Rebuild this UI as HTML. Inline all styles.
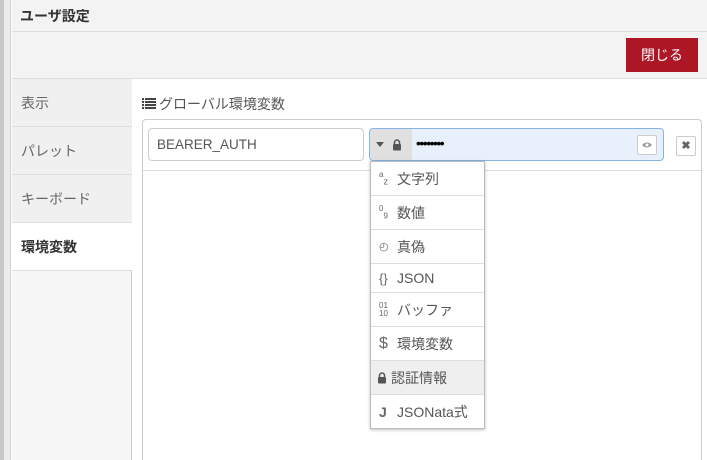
<!DOCTYPE html>
<html style="width:707px;height:460px;overflow:hidden"><head><meta charset="utf-8"><style>
*{box-sizing:border-box;margin:0;padding:0}
body{width:707px;height:460px;overflow:hidden;background:#fff;font-family:"Liberation Sans","Noto Sans CJK JP",sans-serif;font-size:14px;color:#555;position:relative}
.abs{position:absolute}
.strip{left:0;top:0;width:4px;height:460px;background:#c8c8c8}
.strip2{left:4px;top:0;width:7px;height:460px;background:#ececec;border-right:1px solid #d0d0d0}
.hdr{left:12px;top:0;width:695px;height:32px;background:#f3f3f3;border-bottom:1px solid #ddd;font-weight:bold;color:#333;padding:6px 0 0 8px}
.bar{left:12px;top:32px;width:695px;height:47px;background:#f3f3f3;border-bottom:1px solid #ddd}
.btn{left:626px;top:38px;width:72px;height:34px;background:#ad1625;color:#fff;text-align:center;line-height:34px;font-size:14px}
.side{left:12px;top:79px;width:120px;height:381px;background:#f7f7f7;border-right:1px solid #ccc}
.tab{position:absolute;left:0;width:120px;height:48px;background:#f0f0f0;border-bottom:1px solid #ddd;padding:14px 0 0 9px;color:#666;font-size:14px}
.tab.act{background:#fff;color:#333;font-weight:bold}
.panel{left:142px;top:119px;width:560px;height:341px;border:1px solid #ccc;border-bottom:none;border-radius:4px 4px 0 0}
.inp{left:148px;top:128px;width:216px;height:33px;border:1px solid #ccc;border-radius:4px;padding:8px 0 0 8px;color:#555;font-size:13.5px}
.pw{left:369px;top:128px;width:295px;height:33px;border:1px solid #85b4e6;border-radius:4px;background:#e8f0fc}
.menu{left:370px;top:161px;width:115px;height:268px;background:#fff;border:1px solid #bbb;box-shadow:0 1px 3px rgba(0,0,0,.25)}
.mi{position:absolute;left:0;width:113px;border-bottom:1px solid #ddd;font-size:14px;color:#555;padding-left:8px;display:flex;align-items:center}
.mi .ic{width:18px;font-size:10px;color:#666}
</style></head><body>
<div class="abs strip"></div><div class="abs strip2"></div>
<div class="abs hdr">ユーザ設定</div>
<div class="abs bar"></div>
<div class="abs btn">閉じる</div>
<div class="abs side">
<div class="tab" style="top:0">表示</div>
<div class="tab" style="top:48px">パレット</div>
<div class="tab" style="top:96px">キーボード</div>
<div class="tab act" style="top:144px">環境変数</div>
</div>
<div class="abs" style="left:132px;top:79px;width:575px;height:381px;background:#fff"></div>
<svg class="abs" style="left:142px;top:98px" width="14" height="11" viewBox="0 0 14 11"><g fill="#444"><rect x="0" y="0" width="2" height="2"/><rect x="3" y="0" width="11" height="2"/><rect x="0" y="3" width="2" height="2"/><rect x="3" y="3" width="11" height="2"/><rect x="0" y="6" width="2" height="2"/><rect x="3" y="6" width="11" height="2"/><rect x="0" y="9" width="2" height="2"/><rect x="3" y="9" width="11" height="2"/></g></svg>
<div class="abs" style="left:159px;top:94px;font-size:14px;color:#555">グローバル環境変数</div>
<div class="abs panel"></div>
<div class="abs" style="left:143px;top:170px;width:558px;height:1px;background:#ddd"></div>
<div class="abs inp">BEARER_AUTH</div>
<div class="abs pw">
<div class="abs" style="left:0;top:0;width:42px;height:31px;background:#e0e0e0;border-radius:4px 0 0 4px"></div>
<div class="abs" style="left:6px;top:13px;width:0;height:0;border-left:4px solid transparent;border-right:4px solid transparent;border-top:5px solid #555"></div>
<svg class="abs" style="left:22px;top:10px" width="10" height="12" viewBox="0 0 10 12"><path d="M2.5 5V3.5a2.5 2.5 0 0 1 5 0V5" fill="none" stroke="#555" stroke-width="1.5"/><rect x="1" y="5" width="8" height="6.5" rx="1" fill="#555"/></svg>
<div class="abs" style="left:46px;top:6px;font-size:14px;color:#000;letter-spacing:-1.5px">••••••••</div>
<div class="abs" style="left:267px;top:6px;width:20px;height:20px;background:#fff;border:1px solid #ccc;border-radius:2px;"><svg width="18" height="18" viewBox="0 0 18 18"><path d="M4 9q5-5 10 0q-5 5-10 0z" fill="#999"/><circle cx="9" cy="9" r="1.5" fill="#fff"/></svg></div>
</div>
<div class="abs" style="left:676px;top:136px;width:20px;height:20px;border:1px solid #ccc;border-radius:2px;text-align:center;line-height:18px;font-size:11px;color:#666;font-weight:bold">✖</div>
<div class="abs menu">
<div class="mi" style="top:0;height:34px"><span class="ic"><sup style="font-size:8px">a</sup><sub style="font-size:9px">z</sub></span>文字列</div>
<div class="mi" style="top:34px;height:34px"><span class="ic"><sup style="font-size:8px">0</sup><sub style="font-size:8px">9</sub></span>数値</div>
<div class="mi" style="top:68px;height:34px"><span class="ic" style="font-size:11px">◴</span>真偽</div>
<div class="mi" style="top:102px;height:29px"><span class="ic" style="font-size:13px">{}</span>JSON</div>
<div class="mi" style="top:131px;height:34px"><span class="ic" style="font-size:8px;line-height:8px">01<br>10</span>バッファ</div>
<div class="mi" style="top:165px;height:34px"><span class="ic" style="font-size:16px">$</span>環境変数</div>
<div class="mi" style="top:199px;height:34px;background:#efefef;padding-left:6px"><svg width="10" height="12" viewBox="0 0 10 12" style="margin-right:4px"><path d="M2.5 5V3.5a2.5 2.5 0 0 1 5 0V5" fill="none" stroke="#555" stroke-width="1.5"/><rect x="1" y="5" width="8" height="6.5" rx="1" fill="#555"/></svg>認証情報</div>
<div class="mi" style="top:233px;height:34px;border-bottom:none"><span class="ic" style="font-size:14px;font-weight:bold">J</span>JSONata式</div>
</div>
</body></html>
